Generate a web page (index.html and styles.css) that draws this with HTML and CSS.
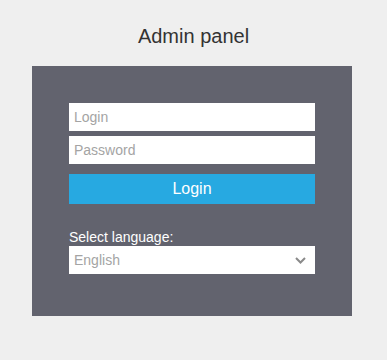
FILE: index.html
```html
<!DOCTYPE html>
<html lang="en">
<head>
  <meta charset="UTF-8">
  <meta name="viewport" content="width=device-width, initial-scale=1.0">
  <title>Admin panel</title>
  <link rel="stylesheet" href="styles.css">
</head>
<body>

  <!-- Tiêu đề -->
  <h1 class="title">Admin panel</h1>

  <!-- Khung đăng nhập -->
  <div class="login-box">
    <input class="field" type="text" placeholder="Login">
    <input class="field" type="password" placeholder="Password">
    <button class="btn-login" type="button">Login</button>

    <label class="lang-label">Select language:</label>
    <div class="lang-select">
      <span class="lang-value">English</span>
      <svg class="chevron" width="11" height="7" viewBox="0 0 11 7">
        <polyline points="1,1 5.5,5.5 10,1" fill="none" stroke="#8a8a8a" stroke-width="2"/>
      </svg>
    </div>
  </div>

</body>
</html>
```

FILE: styles.css
```css
body {
  margin: 0;
  background-color: #efefef;
  font-family: "Liberation Sans", Arial, sans-serif;
}

.title {
  margin: 0;
  padding-top: 24px;
  height: 66px;
  box-sizing: border-box;
  text-align: center;
  font-size: 20px;
  font-weight: normal;
  color: #333;
  line-height: 24px;
}

.login-box {
  width: 320px;
  height: 250px;
  margin-left: 32px;
  box-sizing: border-box;
  padding: 37px;
  background-color: #62636e;
  display: flex;
  flex-direction: column;
}

.field {
  height: 28px;
  border: none;
  margin: 0 0 5px 0;
  padding: 0 5px;
  font-family: inherit;
  font-size: 14px;
  background: #fff;
  outline: none;
}

.field::placeholder {
  color: #a4a4a4;
}

.btn-login {
  height: 30px;
  margin-top: 5px;
  border: none;
  background-color: #27a9e1;
  color: #fff;
  font-family: inherit;
  font-size: 16px;
}

.lang-label {
  margin-top: 24px;
  color: #fff;
  font-size: 14px;
  line-height: 18px;
}

.lang-select {
  height: 28px;
  margin-top: 0;
  background: #fff;
  display: flex;
  align-items: center;
  justify-content: space-between;
  padding: 0 9px 0 5px;
}

.lang-value {
  color: #a4a4a4;
  font-size: 14px;
}
```
